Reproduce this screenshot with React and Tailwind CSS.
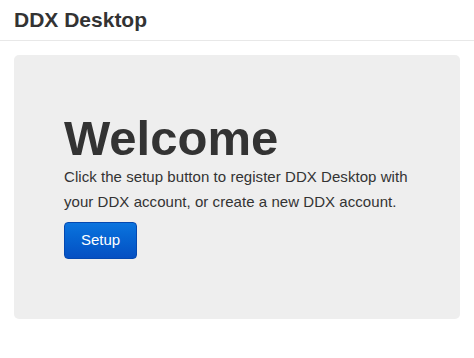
export default function App() {
  return (
    <div className="w-[474px] h-[358px] bg-white overflow-hidden" style={{ fontFamily: '"Liberation Sans", Arial, sans-serif' }}>
      <div className="h-[41px] border-b border-[#e8e8e8] pl-[14px] flex items-center">
        <h1 className="text-[21px] font-bold text-[#333] leading-none pb-[2px]">DDX Desktop</h1>
      </div>
      <div className="mx-[14px] mt-[14px] h-[264px] rounded-[5px] bg-[#eeeeee] pl-[50px] pt-[55px]">
        <h2 className="text-[49px] font-bold text-[#333] leading-[56px]">Welcome</h2>
        <p className="text-[15px] text-[#333] leading-[25px] mt-[-2px] tracking-[0.05px]">
          Click the setup button to register DDX Desktop with<br />
          your DDX account, or create a new DDX account.
        </p>
        <button className="mt-[8px] w-[73px] h-[37px] rounded-[4px] bg-gradient-to-b from-[#0b74de] to-[#054fc2] border border-[#0448b0] text-white text-[15px]">
          Setup
        </button>
      </div>
    </div>
  );
}
